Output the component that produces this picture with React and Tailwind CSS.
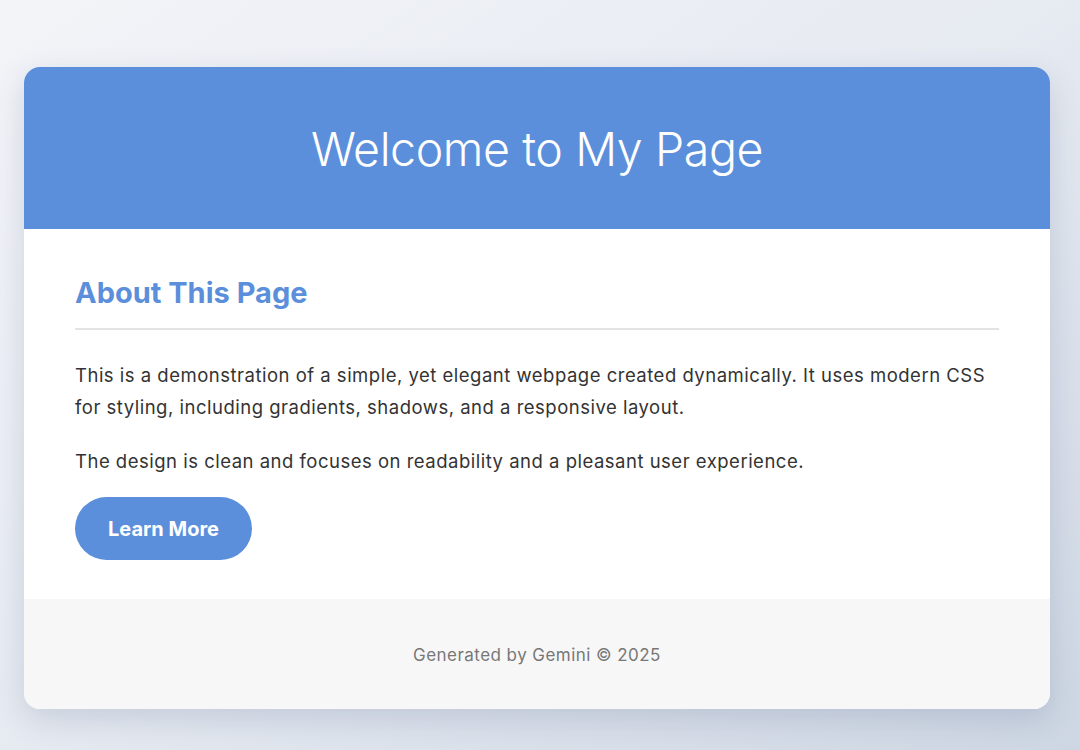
import React from 'react';

const App = () => {
    return (
        <div className="min-h-[750px] w-full bg-gradient-to-br from-[#f2f4f8] via-[#e6eaf1] to-[#cdd6e3] pl-[24px] pr-[30px] pt-[67px] pb-[41px]" style={{ fontFamily: 'Inter, "Noto Sans", sans-serif' }}>
            <div className="bg-white rounded-[16px] overflow-hidden shadow-[0_10px_30px_rgba(60,80,120,0.18)]">
                {/* header */}
                <div className="bg-[#5c8fdb] h-[162px] flex items-center justify-center pt-[3px]">
                    <h1 className="text-white text-[46.5px] font-light tracking-[-0.4px]">Welcome to My Page</h1>
                </div>

                {/* body */}
                <div className="px-[51px] pt-[46px] pb-[39px]">
                    <h2 className="text-[#5c8fdb] text-[29px] leading-[36px] font-bold pb-[17px] border-b-2 border-[#e3e3e3]">About This Page</h2>
                    <p className="mt-[29px] text-[18.5px] leading-[32px] tracking-[0.5px] text-[#333]">
                        This is a demonstration of a simple, yet elegant webpage created dynamically. It uses modern CSS for styling, including gradients, shadows, and a responsive layout.
                    </p>
                    <p className="mt-[22px] text-[18.5px] leading-[32px] tracking-[0.5px] text-[#333]">
                        The design is clean and focuses on readability and a pleasant user experience.
                    </p>
                    <button className="mt-[20px] h-[63px] px-[33px] rounded-full bg-[#5c8fdb] text-white text-[20px] font-bold">Learn More</button>
                </div>

                {/* footer */}
                <div className="bg-[#f7f7f7] h-[110px] flex items-center justify-center pt-[3px]">
                    <span className="text-[17px] tracking-[0.45px] text-[#777]">Generated by Gemini © 2025</span>
                </div>
            </div>
        </div>
    );
};

export default App;
